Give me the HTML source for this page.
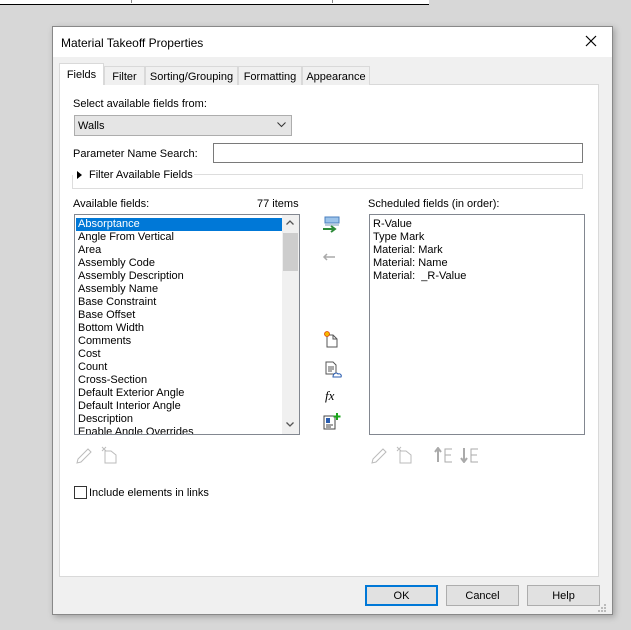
<!DOCTYPE html>
<html><head><meta charset="utf-8"><style>
*{margin:0;padding:0;box-sizing:border-box}
body{width:631px;height:630px;background:#d7d7d7;position:relative;overflow:hidden;font-family:"Liberation Sans",sans-serif;font-size:11px;color:#000}
.a{position:absolute}
.lst div{height:13px;line-height:13px;padding-left:3px;white-space:nowrap}
.btn{position:absolute;top:585px;height:21px;background:#e1e1e1;border:1px solid #adadad;text-align:center;line-height:20px;font-size:11px}
.tab{position:absolute;top:66px;height:19px;line-height:20px;background:#f0f0f0;border:1px solid #d9d9d9;border-bottom:none;text-align:center}
</style></head><body>
<div class="a" style="left:0;top:0;width:429px;height:5px;background:#fff;border-bottom:1px solid #000"></div>
<div class="a" style="left:131px;top:0;width:1px;height:3px;background:#888"></div>
<div class="a" style="left:332px;top:0;width:1px;height:3px;background:#888"></div>
<div class="a" style="left:52px;top:26px;width:561px;height:589px;background:#f0f0f0;border:1px solid #888;box-shadow:2px 2px 6px rgba(0,0,0,.25)"></div>
<div class="a" style="left:53px;top:27px;width:559px;height:30px;background:#fff"></div>
<div class="a" style="left:61px;top:36px;font-size:12px">Material Takeoff Properties</div>
<svg class="a" style="left:585px;top:35px" width="12" height="12"><path d="M1 1L11 11M11 1L1 11" stroke="#000" stroke-width="1.2"/></svg>
<div class="a" style="left:59px;top:84px;width:540px;height:493px;background:#fff;border:1px solid #d9d9d9"></div>
<div class="tab" style="left:104px;width:41px">Filter</div>
<div class="tab" style="left:145px;width:93px">Sorting/Grouping</div>
<div class="tab" style="left:238px;width:64px">Formatting</div>
<div class="tab" style="left:302px;width:68px">Appearance</div>
<div class="tab" style="left:59px;top:63px;width:45px;height:22px;background:#fff;line-height:22px">Fields</div>
<div class="a" style="left:73px;top:98px">Select available fields from:</div>
<div class="a" style="left:74px;top:115px;width:218px;height:21px;background:#e5e5e5;border:1px solid #adadad;line-height:20px;padding-left:3px">Walls</div>
<svg class="a" style="left:277px;top:122px" width="9" height="6"><path d="M0.5 0.5L4.5 4.5L8.5 0.5" stroke="#333" fill="none"/></svg>
<div class="a" style="left:73px;top:148px">Parameter Name Search:</div>
<div class="a" style="left:213px;top:143px;width:370px;height:20px;background:#fff;border:1px solid #7a7a7a"></div>
<svg class="a" style="left:77px;top:171px" width="6" height="8"><path d="M0 0L5 4L0 8Z" fill="#000"/></svg>
<div class="a" style="left:89px;top:169px">Filter Available Fields</div>
<div class="a" style="left:194px;top:174px;width:389px;height:1px;background:#ddd"></div>
<div class="a" style="left:72px;top:175px;width:511px;height:14px;border:1px solid #ddd;border-top:none"></div>
<div class="a" style="left:73px;top:198px">Available fields:</div>
<div class="a" style="left:257px;top:198px">77 items</div>
<div class="a" style="left:368px;top:198px">Scheduled fields (in order):</div>
<div class="a lst" style="left:74px;top:214px;width:226px;height:221px;border:1px solid #828790;background:#fff;overflow:hidden;padding-top:3px">
<div style="background:#0078d7;color:#fff;width:206px;margin-left:1px;padding-left:2px">Absorptance</div>
<div>Angle From Vertical</div><div>Area</div><div>Assembly Code</div><div>Assembly Description</div><div>Assembly Name</div><div>Base Constraint</div><div>Base Offset</div><div>Bottom Width</div><div>Comments</div><div>Cost</div><div>Count</div><div>Cross-Section</div><div>Default Exterior Angle</div><div>Default Interior Angle</div><div>Description</div><div>Enable Angle Overrides</div>
</div>
<div class="a" style="left:282px;top:215px;width:17px;height:219px;background:#f0f0f0"></div>
<div class="a" style="left:283px;top:233px;width:15px;height:38px;background:#cdcdcd"></div>
<svg class="a" style="left:286px;top:220px" width="8" height="5"><path d="M0.5 4.5L4 1L7.5 4.5" stroke="#555" fill="none" stroke-width="1.3"/></svg>
<svg class="a" style="left:286px;top:422px" width="8" height="5"><path d="M0.5 0.5L4 4L7.5 0.5" stroke="#555" fill="none" stroke-width="1.3"/></svg>
<div class="a lst" style="left:369px;top:214px;width:216px;height:221px;border:1px solid #828790;background:#fff;padding-top:3px">
<div>R-Value</div><div>Type Mark</div><div>Material: Mark</div><div>Material: Name</div><div>Material: &nbsp;_R-Value</div>
</div>
<svg class="a" style="left:322px;top:216px" width="18" height="18"><rect x="3" y="1" width="14" height="6" fill="#9cc3ea" stroke="#4a7fbf"/><rect x="3" y="8" width="14" height="2" fill="#bcd"/><path d="M1 13H12M9 10L13 13L9 16" stroke="#2e8b3a" stroke-width="2" fill="none"/></svg>
<svg class="a" style="left:322px;top:252px" width="14" height="10"><path d="M13 5H2M5 2L2 5L5 8" stroke="#aaa" stroke-width="1.5" fill="none"/></svg>
<svg class="a" style="left:323px;top:331px" width="16" height="17"><path d="M4 4H10L14 8V16H4Z" fill="#fff" stroke="#555"/><path d="M10 4V8H14" fill="none" stroke="#555"/><circle cx="4" cy="3" r="2.5" fill="#f5b800" stroke="#e04000" stroke-width=".8"/></svg>
<svg class="a" style="left:325px;top:361px" width="18" height="18"><path d="M1 1H8L11 4V13H1Z" fill="#fff" stroke="#555"/><path d="M3 6H9M3 8H9M3 10H7" stroke="#555"/><path d="M8 16C8 12 12 11 13 13C15 12 17 14 16 16Z" fill="#fff" stroke="#2a5db0"/></svg>
<div class="a" style="left:325px;top:388px;font-family:'Liberation Serif',serif;font-style:italic;font-size:13px">fx</div>
<svg class="a" style="left:323px;top:413px" width="18" height="18"><rect x="1" y="3" width="11" height="13" fill="#fff" stroke="#444"/><rect x="3" y="5" width="4" height="5" fill="#2a5db0"/><path d="M3 12H10M3 14H8" stroke="#444"/><path d="M14 0V7M10.5 3.5H17.5" stroke="#1aa51a" stroke-width="2"/></svg>
<svg class="a" style="left:75px;top:447px" width="18" height="18"><path d="M2 16L3 12L13 2L16 5L6 15Z" fill="none" stroke="#bbb"/></svg>
<svg class="a" style="left:101px;top:446px" width="18" height="18"><path d="M4 5H10L15 9V17H4Z" fill="none" stroke="#bbb"/><path d="M1 1L5 5M5 1L1 5" stroke="#bbb"/></svg>
<svg class="a" style="left:370px;top:447px" width="18" height="18"><path d="M2 16L3 12L13 2L16 5L6 15Z" fill="none" stroke="#bbb"/></svg>
<svg class="a" style="left:396px;top:446px" width="18" height="18"><path d="M4 5H10L15 9V17H4Z" fill="none" stroke="#bbb"/><path d="M1 1L5 5M5 1L1 5" stroke="#bbb"/></svg>
<svg class="a" style="left:434px;top:447px" width="20" height="16"><path d="M4 15V2M1 5L4 1L7 5" stroke="#aaa" stroke-width="2" fill="none"/><path d="M18 2H11V15H18M11 8H17" stroke="#aaa" fill="none"/></svg>
<svg class="a" style="left:460px;top:447px" width="20" height="16"><path d="M4 1V14M1 11L4 15L7 11" stroke="#aaa" stroke-width="2" fill="none"/><path d="M18 2H11V15H18M11 8H17" stroke="#aaa" fill="none"/></svg>
<div class="a" style="left:74px;top:486px;width:13px;height:13px;border:1px solid #333;background:#fff"></div>
<div class="a" style="left:89px;top:487px">Include elements in links</div>
<div class="btn" style="left:365px;width:73px;border:2px solid #0078d7;line-height:18px">OK</div>
<div class="btn" style="left:446px;width:73px">Cancel</div>
<div class="btn" style="left:527px;width:73px">Help</div>
<svg class="a" style="left:597px;top:603px" width="10" height="10"><g fill="#bbb"><rect x="7" y="1" width="2" height="2"/><rect x="4" y="4" width="2" height="2"/><rect x="7" y="4" width="2" height="2"/><rect x="1" y="7" width="2" height="2"/><rect x="4" y="7" width="2" height="2"/><rect x="7" y="7" width="2" height="2"/></g></svg>
</body></html>
